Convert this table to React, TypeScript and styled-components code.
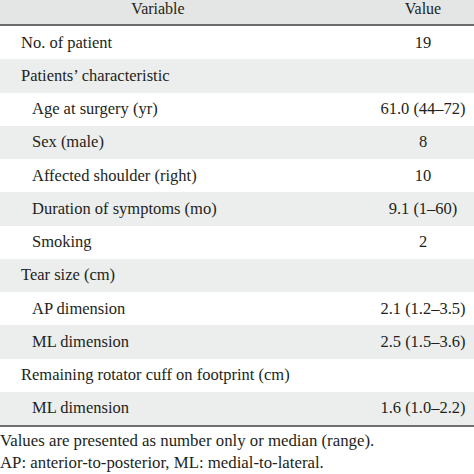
import React from 'react';
import styled, { createGlobalStyle } from 'styled-components';

interface Row {
  label: string;
  value?: string;
  indent?: boolean;
}

const ROWS: Row[] = [
  { label: 'No. of patient', value: '19' },
  { label: 'Patients’ characteristic' },
  { label: 'Age at surgery (yr)', value: '61.0 (44–72)', indent: true },
  { label: 'Sex (male)', value: '8', indent: true },
  { label: 'Affected shoulder (right)', value: '10', indent: true },
  { label: 'Duration of symptoms (mo)', value: '9.1 (1–60)', indent: true },
  { label: 'Smoking', value: '2', indent: true },
  { label: 'Tear size (cm)' },
  { label: 'AP dimension', value: '2.1 (1.2–3.5)', indent: true },
  { label: 'ML dimension', value: '2.5 (1.5–3.6)', indent: true },
  { label: 'Remaining rotator cuff on footprint (cm)' },
  { label: 'ML dimension', value: '1.6 (1.0–2.2)', indent: true },
];

const App: React.FC = () => {
  return (
    <>
      <GlobalStyle />
      <Page>
        <Table>
          <HeaderRow>
            <HeadCell>Variable</HeadCell>
            <HeadCell>Value</HeadCell>
          </HeaderRow>
          {ROWS.map((row, i) => (
            <BodyRow key={i} $shaded={i % 2 === 1}>
              <LabelCell $indent={!!row.indent}>{row.label}</LabelCell>
              <ValueCell>{row.value ?? ''}</ValueCell>
            </BodyRow>
          ))}
        </Table>
        <Notes>
          <p>Values are presented as number only or median (range).</p>
          <p>AP: anterior-to-posterior, ML: medial-to-lateral.</p>
        </Notes>
      </Page>
    </>
  );
};

const GlobalStyle = createGlobalStyle`
  html, body {
    margin: 0;
    padding: 0;
    background: #ffffff;
    overflow: hidden;
  }
  body {
    font-family: "Liberation Serif", "Times New Roman", serif;
    color: #231f20;
  }
`;

const Page = styled.div`
  width: 474px;
  height: 474px;
  overflow: hidden;
`;

// the table is wider than the window, its right edge is clipped like in the source
const Table = styled.div`
  width: 530px;
  display: flex;
  flex-direction: column;
  border-bottom: 2px solid #6f7171;
`;

const HeaderRow = styled.div`
  display: grid;
  grid-template-columns: 316px 214px;
  height: 24px;
  background: #e4e6e6;
  border-bottom: 2px solid #6a6c6c;
`;

const HeadCell = styled.div`
  text-align: center;
  font-size: 16px;
  line-height: 18px;
`;

const BodyRow = styled.div<{ $shaded: boolean }>`
  display: grid;
  grid-template-columns: 316px 214px;
  align-items: center;
  height: 33.25px;
  background: ${(p) => (p.$shaded ? '#eceeee' : '#ffffff')};
`;

const LabelCell = styled.div<{ $indent: boolean }>`
  font-size: 16.5px;
  line-height: 20px;
  padding-left: ${(p) => (p.$indent ? '32px' : '21px')};
  white-space: nowrap;
`;

const ValueCell = styled.div`
  font-size: 16.5px;
  line-height: 20px;
  text-align: center;
  white-space: nowrap;
`;

const Notes = styled.div`
  padding-top: 3px;
  font-size: 16.8px;
  line-height: 22px;

  p {
    margin: 0;
    white-space: nowrap;
  }
`;

export default App;
